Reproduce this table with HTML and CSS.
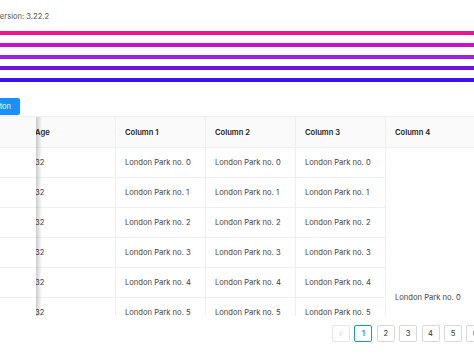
FILE: index.html
```html
<!DOCTYPE html>
<html>
  <head>
    <title>Table</title>
    <link rel="stylesheet" href="styles.css">
  </head>
  <body>
    <div class="page">
      <p class="version">Version: 3.22.2</p>
      <div class="bars">
        <div class="bar bar-1"></div>
        <div class="bar bar-2"></div>
        <div class="bar bar-3"></div>
        <div class="bar bar-4"></div>
        <div class="bar bar-5"></div>
      </div>
      <button class="btn">Button</button>

      <div class="table">
        <div class="scroller">
          <table class="grid head">
            <tr>
              <th>Age</th>
              <th>Column 1</th>
              <th>Column 2</th>
              <th>Column 3</th>
              <th>Column 4</th>
            </tr>
          </table>
          <div class="body">
            <table class="grid rows">
              <tr><td>32</td><td>London Park no. 0</td><td>London Park no. 0</td><td>London Park no. 0</td><td class="span" rowspan="10">London Park no. 0</td></tr>
              <tr><td>32</td><td>London Park no. 1</td><td>London Park no. 1</td><td>London Park no. 1</td></tr>
              <tr><td>32</td><td>London Park no. 2</td><td>London Park no. 2</td><td>London Park no. 2</td></tr>
              <tr><td>32</td><td>London Park no. 3</td><td>London Park no. 3</td><td>London Park no. 3</td></tr>
              <tr><td>32</td><td>London Park no. 4</td><td>London Park no. 4</td><td>London Park no. 4</td></tr>
              <tr><td>32</td><td>London Park no. 5</td><td>London Park no. 5</td><td>London Park no. 5</td></tr>
              <tr><td>32</td><td>London Park no. 6</td><td>London Park no. 6</td><td>London Park no. 6</td></tr>
              <tr><td>32</td><td>London Park no. 7</td><td>London Park no. 7</td><td>London Park no. 7</td></tr>
              <tr><td>32</td><td>London Park no. 8</td><td>London Park no. 8</td><td>London Park no. 8</td></tr>
              <tr><td>32</td><td>London Park no. 9</td><td>London Park no. 9</td><td>London Park no. 9</td></tr>
            </table>
          </div>
        </div>

        <!-- fixed left column, lies over the scrolled cells -->
        <div class="fixed">
          <div class="fixed-inner">
            <div class="fixed-head"></div>
            <div class="fixed-cell"></div>
            <div class="fixed-cell"></div>
            <div class="fixed-cell"></div>
            <div class="fixed-cell"></div>
            <div class="fixed-cell"></div>
            <div class="fixed-cell"></div>
          </div>
        </div>
      </div>

      <ul class="pagination">
        <li class="page-item disabled">
          <svg width="8" height="8" viewBox="0 0 8 8"><path d="M5 1.6 L2.6 4 L5 6.4" fill="none" stroke="#c8c8c8" stroke-width="0.9"/></svg>
        </li>
        <li class="page-item active">1</li>
        <li class="page-item">2</li>
        <li class="page-item">3</li>
        <li class="page-item">4</li>
        <li class="page-item">5</li>
        <li class="page-item">6</li>
        <li class="page-item">7</li>
      </ul>
    </div>
  </body>
</html>
```

FILE: styles.css
```css
body {
  font-family: Inter, "Liberation Sans", Arial, sans-serif;
  font-size: 7.6px;
  margin: 0;
  overflow: hidden;
  background: white;
  color: rgba(0, 0, 0, 0.85);
}

.page {
  margin-left: -21px;
  width: 620px;
}

.version {
  margin: 0;
  padding: 11px 0 0 16px;
  line-height: 12px;
  color: #555;
}

.bars {
  display: flex;
  flex-direction: column;
  gap: 7.8px;
  margin-top: 8px;
}

.bar {
  height: 4px;
}

.bar-1 { background: #f0148c; }
.bar-2 { background: #c814c8; }
.bar-3 { background: #a020e0; }
.bar-4 { background: #7010e0; }
.bar-5 { background: #4010f0; }

.btn {
  display: block;
  margin-top: 16px;
  height: 17px;
  width: 41px;
  padding: 0;
  border: none;
  border-radius: 2px;
  background: #1890ff;
  color: white;
  font-family: inherit;
  font-size: 7.6px;
}

/* table */

.table {
  position: relative;
  margin-top: 1px;
  border-top: 1px solid #f0f0f0;
}

.scroller {
  margin-left: 47px;
}

.grid {
  border-collapse: separate;
  border-spacing: 0;
  table-layout: fixed;
  width: 450px;
}

.grid th,
.grid td {
  width: 90px;
  box-sizing: border-box;
  padding: 0 9px;
  text-align: left;
  white-space: nowrap;
  border-right: 1px solid #f0f0f0;
  border-bottom: 1px solid #f0f0f0;
}

.grid th {
  height: 31px;
  background: #fafafa;
  font-weight: 600;
  color: #222;
}

.grid td {
  height: 30px;
  color: #444;
}

.grid td.span {
  vertical-align: middle;
}

.body {
  height: 168px;
  overflow: hidden;
}

.fixed {
  position: absolute;
  left: 0;
  top: 0;
  width: 57px;
  height: 199px;
}

.fixed-inner {
  height: 100%;
  overflow: hidden;
  background: white;
}

.fixed::after {
  content: "";
  position: absolute;
  top: 0;
  bottom: 0;
  left: 100%;
  width: 6px;
  background: linear-gradient(to right, rgba(0, 0, 0, 0.2), rgba(0, 0, 0, 0));
}

.fixed-head {
  height: 30px;
  background: #fafafa;
  border-bottom: 1px solid #f0f0f0;
}

.fixed-cell {
  height: 29px;
  border-bottom: 1px solid #f0f0f0;
}

/* pagination */

.pagination {
  display: flex;
  gap: 4.4px;
  list-style: none;
  margin: 9px 0 0 353px;
  padding: 0;
}

.page-item {
  box-sizing: border-box;
  width: 18px;
  height: 17px;
  display: flex;
  align-items: center;
  justify-content: center;
  border: 1px solid #d9d9d9;
  border-radius: 2px;
  color: #333;
}

.page-item.active {
  border-color: #1890ff;
  color: #1890ff;
  font-weight: 600;
}

.page-item.disabled {
  border-color: #e6e6e6;
}
```
